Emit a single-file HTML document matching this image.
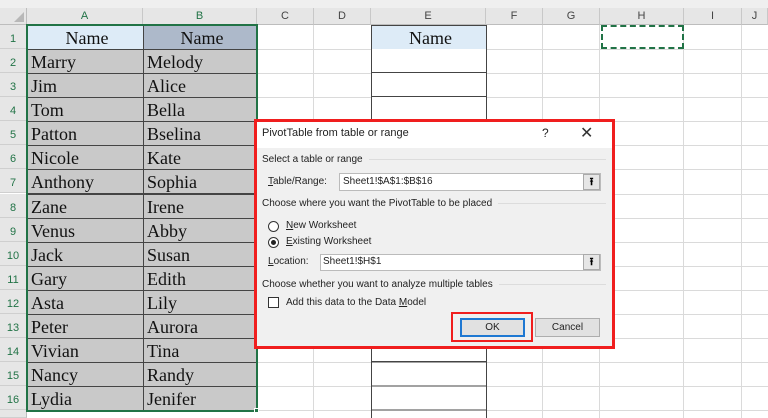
<!DOCTYPE html>
<html><head><meta charset="utf-8"><style>
*{margin:0;padding:0;box-sizing:border-box}
body{width:768px;height:418px;overflow:hidden;background:#fff;position:relative;font-family:"Liberation Sans",sans-serif}
.a{position:absolute}
.ch{position:absolute;top:8px;height:17px;background:#e6e6e6;border-right:1px solid #c8c8c8;font-size:11px;color:#444;text-align:center;line-height:17px;border-bottom:1px solid #bdbdbd}
.rh{position:absolute;left:0;width:27px;height:24px;background:#e6e6e6;border-bottom:1px solid #cfcfcf;border-right:1px solid #bdbdbd;font-size:11px;color:#444;text-align:center;line-height:28px}
.vl{position:absolute;top:25px;bottom:0;width:1px;background:#dadada}
.hl{position:absolute;left:27px;right:0;height:1px;background:#dadada}
.c{position:absolute;height:25px;font-family:"Liberation Serif",serif;font-size:18px;line-height:24px;color:#111;padding-left:3px;border:1px solid #444;background:#c9c9c9}
.dl{font-family:"Liberation Sans",sans-serif;font-size:10px;color:#222;position:absolute}
.sec{position:absolute;left:262px;width:344px;font-size:10px;color:#222;display:flex;align-items:center;white-space:nowrap}
.sec:after{content:"";flex:1;height:1px;background:#dcdcdc;margin-left:6px}
u{text-decoration:underline}
</style></head><body>
<div class="a" style="left:0;top:0;width:768px;height:8px;background:#efefef"></div>
<div class="a" style="left:0;top:8px;width:27px;height:17px;background:#e6e6e6;border-right:1px solid #bdbdbd;border-bottom:1px solid #bdbdbd"></div>
<div class="a" style="left:14px;top:12px;width:0;height:0;border-left:10px solid transparent;border-bottom:10px solid #b8b8b8"></div>
<div class="ch" style="left:27px;width:116px;color:#217346">A</div>
<div class="ch" style="left:143px;width:114px;color:#217346">B</div>
<div class="ch" style="left:257px;width:57px">C</div>
<div class="ch" style="left:314px;width:57px">D</div>
<div class="ch" style="left:371px;width:115px">E</div>
<div class="ch" style="left:486px;width:57px">F</div>
<div class="ch" style="left:543px;width:57px">G</div>
<div class="ch" style="left:600px;width:84px">H</div>
<div class="ch" style="left:684px;width:58px">I</div>
<div class="ch" style="left:742px;width:26px">J</div>
<div class="vl" style="left:313px"></div><div class="vl" style="left:542px"></div><div class="vl" style="left:599px"></div><div class="vl" style="left:683px"></div><div class="vl" style="left:741px"></div>
<div class="hl" style="top:49px"></div><div class="hl" style="top:73px"></div><div class="hl" style="top:97px"></div><div class="hl" style="top:121px"></div><div class="hl" style="top:145px"></div><div class="hl" style="top:169px"></div><div class="hl" style="top:194px"></div><div class="hl" style="top:218px"></div><div class="hl" style="top:242px"></div><div class="hl" style="top:266px"></div><div class="hl" style="top:290px"></div><div class="hl" style="top:314px"></div><div class="hl" style="top:338px"></div><div class="hl" style="top:362px"></div><div class="hl" style="top:386px"></div><div class="hl" style="top:410px"></div>
<div class="rh" style="top:25px;color:#217346">1</div><div class="rh" style="top:49px;color:#217346">2</div><div class="rh" style="top:73px;color:#217346">3</div><div class="rh" style="top:97px;color:#217346">4</div><div class="rh" style="top:121px;color:#217346">5</div><div class="rh" style="top:145px;color:#217346">6</div><div class="rh" style="top:169px;color:#217346">7</div><div class="rh" style="top:194px;color:#217346">8</div><div class="rh" style="top:218px;color:#217346">9</div><div class="rh" style="top:242px;color:#217346">10</div><div class="rh" style="top:266px;color:#217346">11</div><div class="rh" style="top:290px;color:#217346">12</div><div class="rh" style="top:314px;color:#217346">13</div><div class="rh" style="top:338px;color:#217346">14</div><div class="rh" style="top:362px;color:#217346">15</div><div class="rh" style="top:386px;color:#217346">16</div>
<div class="rh" style="top:410px;height:8px"></div>

<div class="c" style="left:27px;top:25px;width:117px;background:#ddebf7;text-align:center">Name</div>
<div class="c" style="left:143px;top:25px;width:115px;background:#adb9ca;text-align:center">Name</div>
<div class="c" style="left:371px;top:25px;width:116px;background:#ddebf7;text-align:center">Name</div>
<div class="c" style="left:27px;top:49px;width:117px">Marry</div><div class="c" style="left:143px;top:49px;width:115px">Melody</div>
<div class="c" style="left:27px;top:73px;width:117px">Jim</div><div class="c" style="left:143px;top:73px;width:115px">Alice</div>
<div class="c" style="left:27px;top:97px;width:117px">Tom</div><div class="c" style="left:143px;top:97px;width:115px">Bella</div>
<div class="c" style="left:27px;top:121px;width:117px">Patton</div><div class="c" style="left:143px;top:121px;width:115px">Bselina</div>
<div class="c" style="left:27px;top:145px;width:117px">Nicole</div><div class="c" style="left:143px;top:145px;width:115px">Kate</div>
<div class="c" style="left:27px;top:169px;width:117px">Anthony</div><div class="c" style="left:143px;top:169px;width:115px">Sophia</div>
<div class="c" style="left:27px;top:194px;width:117px">Zane</div><div class="c" style="left:143px;top:194px;width:115px">Irene</div>
<div class="c" style="left:27px;top:218px;width:117px">Venus</div><div class="c" style="left:143px;top:218px;width:115px">Abby</div>
<div class="c" style="left:27px;top:242px;width:117px">Jack</div><div class="c" style="left:143px;top:242px;width:115px">Susan</div>
<div class="c" style="left:27px;top:266px;width:117px">Gary</div><div class="c" style="left:143px;top:266px;width:115px">Edith</div>
<div class="c" style="left:27px;top:290px;width:117px">Asta</div><div class="c" style="left:143px;top:290px;width:115px">Lily</div>
<div class="c" style="left:27px;top:314px;width:117px">Peter</div><div class="c" style="left:143px;top:314px;width:115px">Aurora</div>
<div class="c" style="left:27px;top:338px;width:117px">Vivian</div><div class="c" style="left:143px;top:338px;width:115px">Tina</div>
<div class="c" style="left:27px;top:362px;width:117px">Nancy</div><div class="c" style="left:143px;top:362px;width:115px">Randy</div>
<div class="c" style="left:27px;top:386px;width:117px">Lydia</div><div class="c" style="left:143px;top:386px;width:115px">Jenifer</div>
<div class="a" style="left:371px;top:49px;width:116px;height:369px;border-left:1px solid #444;border-right:1px solid #444;background:repeating-linear-gradient(#fff 0,#fff 23px,#444 23px,#444 24.1px)"></div>
<div class="a" style="left:26px;top:24px;width:232px;height:388px;border:2px solid #217346"></div>
<div class="a" style="left:254px;top:408px;width:5px;height:5px;background:#217346;border:1px solid #fff"></div>
<div class="a" style="left:601px;top:25px;width:83px;height:24px;border:2px dashed #217346"></div>

<!-- dialog -->
<div class="a" style="left:254px;top:119px;width:361px;height:230px;border:3px solid #f01e1e;background:#f0f0f0"></div>
<div class="a" style="left:257px;top:122px;width:355px;height:26px;background:#fff"></div>
<div class="dl" style="left:262px;top:127px;font-size:11px">PivotTable from table or range</div>
<div class="dl" style="left:542px;top:126px;font-size:12px">?</div>
<div class="dl" style="left:580px;top:123px;font-size:16px;color:#333">✕</div>
<div class="sec" style="top:154px">Select a table or range</div>
<div class="dl" style="left:268px;top:176px"><u>T</u>able/Range:</div>
<div class="a" style="left:339px;top:173px;width:262px;height:18px;background:#fff;border:1px solid #bbb"></div>
<div class="dl" style="left:343px;top:176px">Sheet1!$A$1:$B$16</div>
<div class="a" style="left:583px;top:174px;width:17px;height:16px;background:#e6e6e6;border:1px solid #aaa;font-size:11px;text-align:center;line-height:15px;font-weight:bold">⭱</div>
<div class="sec" style="top:198px">Choose where you want the PivotTable to be placed</div>
<div class="a" style="left:268px;top:221px;width:11px;height:11px;border:1px solid #333;border-radius:50%;background:#fff"></div>
<div class="dl" style="left:286px;top:220px"><u>N</u>ew Worksheet</div>
<div class="a" style="left:268px;top:237px;width:11px;height:11px;border:1px solid #333;border-radius:50%;background:#fff"></div>
<div class="a" style="left:271px;top:240px;width:5px;height:5px;border-radius:50%;background:#222"></div>
<div class="dl" style="left:286px;top:236px"><u>E</u>xisting Worksheet</div>
<div class="dl" style="left:268px;top:256px"><u>L</u>ocation:</div>
<div class="a" style="left:320px;top:254px;width:281px;height:17px;background:#fff;border:1px solid #bbb"></div>
<div class="dl" style="left:323px;top:256px">Sheet1!$H$1</div>
<div class="a" style="left:583px;top:254px;width:17px;height:16px;background:#e6e6e6;border:1px solid #aaa;font-size:11px;text-align:center;line-height:15px;font-weight:bold">⭱</div>
<div class="sec" style="top:279px">Choose whether you want to analyze multiple tables</div>
<div class="a" style="left:268px;top:297px;width:11px;height:11px;border:1px solid #333;background:#fff"></div>
<div class="dl" style="left:286px;top:297px">Add this data to the Data <u>M</u>odel</div>
<div class="a" style="left:451px;top:312px;width:82px;height:30px;border:2px solid #f01e1e"></div>
<div class="a" style="left:460px;top:318px;width:65px;height:19px;background:#e1e1e1;border:2px solid #1e78d2;font-size:10px;text-align:center;line-height:15px;color:#222">OK</div>
<div class="a" style="left:535px;top:318px;width:65px;height:19px;background:#e1e1e1;border:1px solid #adadad;font-size:10px;text-align:center;line-height:17px;color:#222">Cancel</div>
</body></html>
